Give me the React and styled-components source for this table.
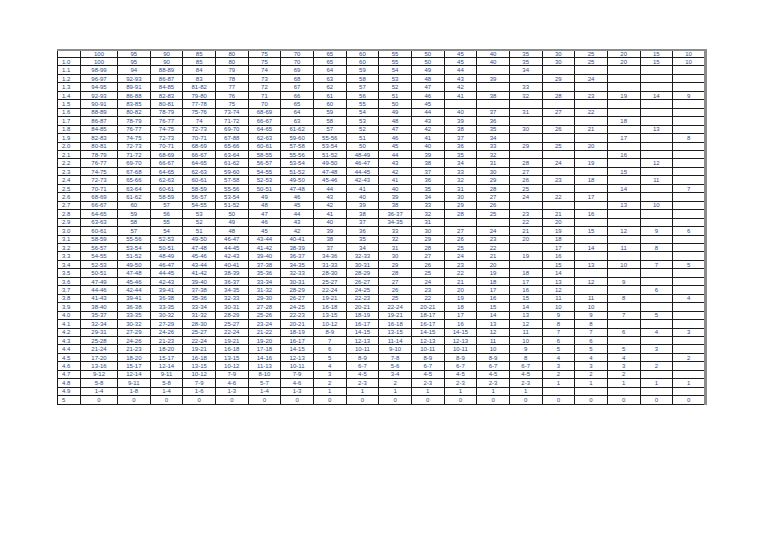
import styled, { createGlobalStyle } from "styled-components";

const GlobalStyle = createGlobalStyle`
  html, body {
    margin: 0;
    padding: 0;
    background: #ffffff;
  }
  body {
    font-family: "Liberation Sans", Arial, sans-serif;
  }
`;

const columns = [100, 95, 90, 85, 80, 75, 70, 65, 60, 55, 50, 45, 40, 35, 30, 25, 20, 15, 10];

// each row: label, then 19 values (blank = empty cell)
const rows = [
  ["1.0", "100,95,90,85,80,75,70,65,60,55,50,45,40,35,30,25,20,15,10"],
  ["1.1", "98-99,94,88-89,84,79,74,69,64,59,54,49,44,,34,,,,,"],
  ["1.2", "96-97,92-93,86-87,83,78,73,68,63,58,53,48,43,39,,29,24,,,"],
  ["1.3", "94-95,89-91,84-85,81-82,77,72,67,62,57,52,47,42,,33,,,,,"],
  ["1.4", "92-93,86-88,82-83,79-80,76,71,66,61,56,51,46,41,38,32,28,23,19,14,9"],
  ["1.5", "90-91,83-85,80-81,77-78,75,70,65,60,55,50,45,,,,,,,,"],
  ["1.6", "88-89,80-82,78-79,75-76,73-74,68-69,64,59,54,49,44,40,37,31,27,22,,,"],
  ["1.7", "86-87,78-79,76-77,74,71-72,66-67,63,58,53,48,43,39,36,,,,18,,"],
  ["1.8", "84-85,76-77,74-75,72-73,69-70,64-65,61-62,57,52,47,42,38,35,30,26,21,,13,"],
  ["1.9", "82-83,74-75,72-73,70-71,67-88,62-63,59-60,55-56,51,46,41,37,34,,,,17,,8"],
  ["2.0", "80-81,72-73,70-71,68-69,65-66,60-61,57-58,53-54,50,45,40,36,33,29,25,20,,,"],
  ["2.1", "78-79,71-72,68-69,66-67,63-64,58-55,55-56,51-52,48-49,44,39,35,32,,,,16,,"],
  ["2.2", "76-77,69-70,66-67,64-65,61-62,56-57,53-54,49-50,46-47,43,38,34,31,28,24,19,,12,"],
  ["2.3", "74-75,67-68,64-65,62-63,59-60,54-55,51-52,47-48,44-45,42,37,33,30,27,,,15,,"],
  ["2.4", "72-73,65-66,62-63,60-61,57-58,52-53,49-50,45-46,42-43,41,36,32,29,26,23,18,,11,"],
  ["2.5", "70-71,63-64,60-61,58-59,55-56,50-51,47-48,44,41,40,35,31,28,25,,,14,,7"],
  ["2.6", "68-69,61-62,58-59,56-57,53-54,49,46,43,40,39,34,30,27,24,22,17,,,"],
  ["2.7", "66-67,60,57,54-55,51-52,48,45,42,39,38,33,29,26,,,,13,10,"],
  ["2.8", "64-65,59,56,53,50,47,44,41,38,36-37,32,28,25,23,21,16,,,"],
  ["2.9", "63-63,58,55,52,49,46,43,40,37,34-35,31,,,22,20,,,,"],
  ["3.0", "60-61,57,54,51,48,45,42,39,36,33,30,27,24,21,19,15,12,9,6"],
  ["3.1", "58-59,55-56,52-53,49-50,46-47,43-44,40-41,38,35,32,29,26,23,20,18,,,,"],
  ["3.2", "56-57,53-54,50-51,47-48,44-45,41-42,38-39,37,34,31,28,25,22,,17,14,11,8,"],
  ["3.3", "54-55,51-52,48-49,45-46,42-43,39-40,36-37,34-36,32-33,30,27,24,21,19,16,,,,"],
  ["3.4", "52-53,49-50,46-47,43-44,40-41,37-38,34-35,31-33,30-31,29,26,23,20,,15,13,10,7,5"],
  ["3.5", "50-51,47-48,44-45,41-42,38-39,35-36,32-33,28-30,28-29,28,25,22,19,18,14,,,,"],
  ["3.6", "47-49,45-46,42-43,39-40,36-37,33-34,30-31,25-27,26-27,27,24,21,18,17,13,12,9,,"],
  ["3.7", "44-46,42-44,39-41,37-38,34-35,31-32,28-29,22-24,24-25,26,23,20,17,16,12,,,6,"],
  ["3.8", "41-43,39-41,36-38,35-36,32-33,29-30,26-27,19-21,22-23,25,22,19,16,15,11,11,8,,4"],
  ["3.9", "38-40,36-38,33-35,33-34,30-31,27-28,24-25,16-18,20-21,22-24,20-21,18,15,14,10,10,,,"],
  ["4.0", "35-37,33-35,30-32,31-32,28-29,25-26,22-23,13-15,18-19,19-21,18-17,17,14,13,9,9,7,5,"],
  ["4.1", "32-34,30-32,27-29,28-30,25-27,23-24,20-21,10-12,16-17,16-18,16-17,16,13,12,8,8,,,"],
  ["4.2", "29-31,27-29,24-26,25-27,22-24,21-22,18-19,8-9,14-15,13-15,14-15,14-15,12,11,7,7,6,4,3"],
  ["4.3", "25-28,24-26,21-23,22-24,19-21,19-20,16-17,7,12-13,11-14,12-13,12-13,11,10,6,6,,,"],
  ["4.4", "21-24,21-23,18-20,19-21,16-18,17-18,14-15,6,10-11,9-10,10-11,10-11,10,9,5,5,5,3,"],
  ["4.5", "17-20,18-20,15-17,16-18,13-15,14-16,12-13,5,8-9,7-8,8-9,8-9,8-9,8,4,4,4,,2"],
  ["4.6", "13-16,15-17,12-14,13-15,10-12,11-13,10-11,4,6-7,5-6,6-7,6-7,6-7,6-7,3,3,3,2,"],
  ["4.7", "9-12,12-14,9-11,10-12,7-9,8-10,7-9,3,4-5,3-4,4-5,4-5,4-5,4-5,2,2,2,,"],
  ["4.8", "5-8,9-11,5-8,7-9,4-6,5-7,4-6,2,2-3,2,2-3,2-3,2-3,2-3,1,1,1,1,1"],
  ["4.9", "1-4,1-8,1-4,1-6,1-3,1-4,1-3,1,1,1,1,1,1,1,,,,,"],
  ["5", "0,0,0,0,0,0,0,0,0,0,0,0,0,0,0,0,0,0,0"],
];

function App() {
  return (
    <>
      <GlobalStyle />
      <Page>
        <Sheet>
          <colgroup>
            <LabelCol />
            <FirstCol />
            {columns.slice(1).map((c) => (
              <col key={c} />
            ))}
          </colgroup>
          <thead>
            <tr>
              <HeadCell />
              {columns.map((c, i) => (
                <HeadCell key={c} $last={i === columns.length - 1}>
                  {c}
                </HeadCell>
              ))}
            </tr>
          </thead>
          <tbody>
            {rows.map(([label, values]) => (
              <tr key={label}>
                <LabelCell>{label}</LabelCell>
                {values.split(",").map((v, i) => (
                  <Cell key={i} $last={i === columns.length - 1}>
                    {v}
                  </Cell>
                ))}
              </tr>
            ))}
          </tbody>
        </Sheet>
      </Page>
    </>
  );
}

const Page = styled.main`
  padding: 49px 0 0 57px;
`;

const Sheet = styled.table`
  width: 650px;
  height: 356px;
  table-layout: fixed;
  border-collapse: collapse;
  color: #2f4d8c;
  font-size: 6px;
  font-family: "Liberation Sans", Arial, sans-serif;
`;

const LabelCol = styled.col`
  width: 23px;
`;

const FirstCol = styled.col`
  width: 37px;
`;

const Cell = styled.td`
  padding: 0;
  line-height: 1;
  text-align: center;
  white-space: nowrap;
  border: 1px solid #1c1c1c;
  border-right: ${(p) => (p.$last ? "3px solid #8c8c8c" : "1px solid #1c1c1c")};
`;

const LabelCell = styled(Cell)`
  text-align: left;
  padding-left: 4px;
`;

const HeadCell = styled(Cell).attrs({ as: "th" })`
  font-weight: normal;
  border-top: 2px solid #8c8c8c;
`;

export default App;
